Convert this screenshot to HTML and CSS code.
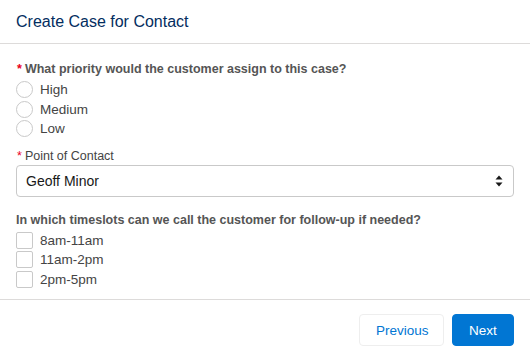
FILE: index.html
```html
<!DOCTYPE html>
<html lang="en">
<head>
  <meta charset="UTF-8">
  <title>Create Case for Contact</title>
  <link rel="stylesheet" href="styles.css">
</head>
<body>

  <div class="header">
    <h2 class="title">Create Case for Contact</h2>
  </div>

  <div class="content">
    <fieldset class="group">
      <legend class="group-label bold"><span class="required">*</span>What priority would the customer assign to this case?</legend>
      <label class="option"><span class="radio"></span>High</label>
      <label class="option"><span class="radio"></span>Medium</label>
      <label class="option"><span class="radio"></span>Low</label>
    </fieldset>

    <div class="field">
      <div class="group-label tight"><span class="required">*</span>Point of Contact</div>
      <div class="select">
        <span>Geoff Minor</span>
        <svg class="arrows" width="8" height="12" viewBox="0 0 8 12">
          <path d="M4 0.5 L7.5 4.5 L0.5 4.5 Z" fill="#181818"/>
          <path d="M4 11.5 L7.5 7.5 L0.5 7.5 Z" fill="#181818"/>
        </svg>
      </div>
    </div>

    <fieldset class="group last">
      <legend class="group-label bold">In which timeslots can we call the customer for follow-up if needed?</legend>
      <label class="option"><span class="checkbox"></span>8am-11am</label>
      <label class="option"><span class="checkbox"></span>11am-2pm</label>
      <label class="option"><span class="checkbox"></span>2pm-5pm</label>
    </fieldset>
  </div>

  <div class="footer">
    <button class="btn btn-neutral">Previous</button>
    <button class="btn btn-brand">Next</button>
  </div>

</body>
</html>
```

FILE: styles.css
```css
body {
  margin: 0;
  font-family: "Liberation Sans", Arial, sans-serif;
  color: #181818;
  background: #fff;
}
.header {
  height: 43px;
  display: flex;
  align-items: center;
  padding: 0 16px;
  border-bottom: 1px solid #dddbda;
}
.title {
  margin: 0;
  font-size: 16px;
  font-weight: normal;
  color: #032d60;
}
.content {
  padding: 16px 16px 0;
}
.group {
  border: 0;
  margin: 0 0 8px;
  padding: 0;
}
.group.last {
  margin-bottom: 10px;
}
.group-label {
  font-size: 12.5px;
  color: #444444;
  line-height: 18px;
  padding: 0;
  margin-bottom: 2px;
}
.group-label.tight {
  margin-bottom: 0;
}
.group-label.bold {
  font-weight: bold;
  color: #555555;
}
.required {
  color: #ea001e;
  margin-right: 3px;
  margin-left: 1px;
}
.option {
  display: flex;
  align-items: center;
  height: 19.5px;
  font-size: 13.5px;
  color: #444444;
}
.radio {
  width: 15px;
  height: 15px;
  border: 1px solid #c9c9c9;
  border-radius: 50%;
  margin-right: 7px;
}
.checkbox {
  width: 15px;
  height: 15px;
  border: 1px solid #c9c9c9;
  border-radius: 2px;
  margin-right: 7px;
}
.field {
  margin-bottom: 14px;
}
.select {
  height: 30px;
  border: 1px solid #c9c9c9;
  border-radius: 4px;
  display: flex;
  align-items: center;
  justify-content: space-between;
  padding: 0 10px 0 9px;
  font-size: 14px;
  color: #181818;
}
.footer {
  border-top: 1px solid #dddbda;
  display: flex;
  justify-content: flex-end;
  gap: 8px;
  padding: 14px 16px 0;
}
.btn {
  height: 32px;
  border-radius: 4px;
  font-family: "Liberation Sans", Arial, sans-serif;
  font-size: 13.5px;
  padding: 0 16px;
  cursor: pointer;
}
.btn-neutral {
  width: 85px;
  background: #fff;
  border: 1px solid #eeeeee;
  color: #0176d3;
}
.btn-brand {
  width: 62px;
  background: #0176d3;
  border: 1px solid #0176d3;
  color: #fff;
}
```
